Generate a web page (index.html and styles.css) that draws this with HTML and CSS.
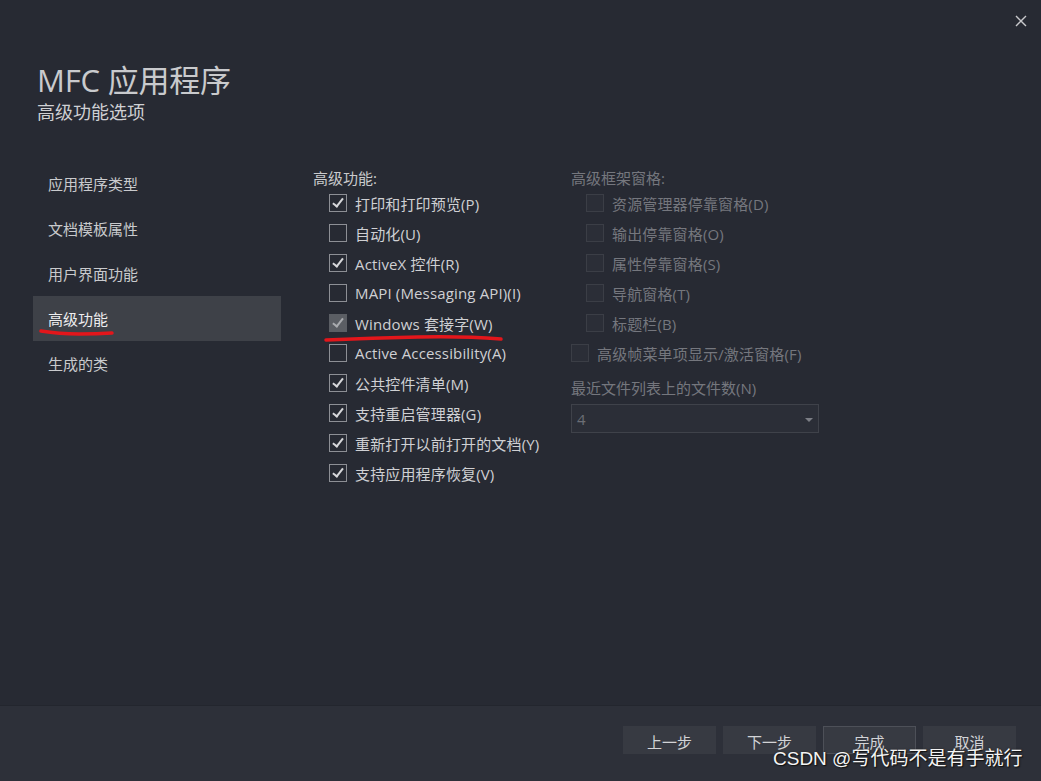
FILE: index.html
```html
<!DOCTYPE html>
<html lang="zh-CN">
<head>
<meta charset="utf-8">
<title>MFC 应用程序</title>
<link rel="stylesheet" href="styles.css">
</head>
<body>
<div class="window">
  <button class="close" aria-label="关闭">
    <svg width="12" height="12" viewBox="0 0 12 12"><path d="M1 1L11 11M11 1L1 11" stroke="#c8c9cc" stroke-width="1.4" fill="none"/></svg>
  </button>
  <header class="header">
    <h1 class="title">MFC 应用程序</h1>
    <div class="subtitle">高级功能选项</div>
  </header>
  <main class="main">
    <nav class="nav">
      <div class="nav-item">应用程序类型</div>
      <div class="nav-item">文档模板属性</div>
      <div class="nav-item">用户界面功能</div>
      <div class="nav-item active">高级功能</div>
      <div class="nav-item">生成的类</div>
    </nav>
    <section class="col col-features">
      <div class="group-label">高级功能:</div>
      <label class="row"><span class="cb checked"></span><span>打印和打印预览(P)</span></label>
      <label class="row"><span class="cb"></span><span>自动化(U)</span></label>
      <label class="row"><span class="cb checked"></span><span>ActiveX 控件(R)</span></label>
      <label class="row"><span class="cb"></span><span>MAPI (Messaging API)(I)</span></label>
      <label class="row"><span class="cb checked dim"></span><span>Windows 套接字(W)</span></label>
      <label class="row"><span class="cb"></span><span>Active Accessibility(A)</span></label>
      <label class="row"><span class="cb checked"></span><span>公共控件清单(M)</span></label>
      <label class="row"><span class="cb checked"></span><span>支持重启管理器(G)</span></label>
      <label class="row"><span class="cb checked"></span><span>重新打开以前打开的文档(Y)</span></label>
      <label class="row"><span class="cb checked"></span><span>支持应用程序恢复(V)</span></label>
    </section>
    <section class="col col-frame disabled">
      <div class="group-label">高级框架窗格:</div>
      <div class="sub">
        <label class="row"><span class="cb off"></span><span>资源管理器停靠窗格(D)</span></label>
        <label class="row"><span class="cb off"></span><span>输出停靠窗格(O)</span></label>
        <label class="row"><span class="cb off"></span><span>属性停靠窗格(S)</span></label>
        <label class="row"><span class="cb off"></span><span>导航窗格(T)</span></label>
        <label class="row"><span class="cb off"></span><span>标题栏(B)</span></label>
      </div>
      <label class="row"><span class="cb off"></span><span>高级帧菜单项显示/激活窗格(F)</span></label>
      <div class="group-label mru">最近文件列表上的文件数(N)</div>
      <div class="select"><span>4</span><span class="arrow"></span></div>
    </section>
  </main>
  <footer class="footer">
    <button class="btn">上一步</button>
    <button class="btn">下一步</button>
    <button class="btn primary">完成</button>
    <button class="btn">取消</button>
  </footer>
  <svg class="mark mark-nav" width="80" height="12" viewBox="0 0 80 12"><path d="M2 4 Q20 7 40 7 Q58 7 73 6" stroke="#e3161b" stroke-width="3.5" fill="none" stroke-linecap="round"/></svg>
  <svg class="mark mark-win" width="190" height="12" viewBox="0 0 190 12"><path d="M3 7 Q50 5 95 4 Q140 3 178 6" stroke="#e3161b" stroke-width="3.5" fill="none" stroke-linecap="round"/></svg>
  <div class="watermark">CSDN @写代码不是有手就行</div>
</div>
</body>
</html>
```

FILE: styles.css
```css
* { box-sizing: border-box; }
html, body { margin: 0; padding: 0; }
body {
  width: 1041px;
  height: 781px;
  overflow: hidden;
  background: #272a33;
  font-family: "Open Sans", "Noto Sans CJK SC", sans-serif;
  color: #d2d3d6;
}
.window {
  position: relative;
  width: 1041px;
  height: 781px;
  display: flex;
  flex-direction: column;
  background: #272a33;
}
.close {
  position: absolute;
  top: 15px;
  right: 14px;
  width: 12px;
  height: 12px;
  padding: 0;
  border: 0;
  background: none;
  display: flex;
}
.header {
  padding: 60px 0 0 37px;
}
.title {
  margin: 0;
  font-weight: normal;
  font-size: 31px;
  line-height: 40px;
  color: #c9cacd;
  letter-spacing: -0.2px;
}
.subtitle {
  font-size: 18px;
  line-height: 24px;
  color: #cfd0d3;
}
.main {
  flex: 1;
  display: flex;
  margin-top: 37px;
}
.nav {
  width: 248px;
  margin-left: 33px;
  display: flex;
  flex-direction: column;
}
.nav-item {
  height: 45px;
  line-height: 46px;
  padding-left: 15px;
  font-size: 15px;
  color: #c9cacd;
}
.nav-item.active {
  background: #3e4148;
  color: #eeeeef;
}
.col {
  padding-top: 7px;
  display: flex;
  flex-direction: column;
}
.col-features {
  margin-left: 32px;
  width: 258px;
}
.group-label {
  font-size: 15px;
  line-height: 20px;
  color: #c9cacd;
}
.col-features .row { padding-left: 16px; }
.sub .row { padding-left: 15px; }
.row {
  height: 30px;
  display: flex;
  align-items: center;
  gap: 8px;
  font-size: 15px;
  letter-spacing: 0.15px;
  color: #cfd0d3;
  white-space: nowrap;
}
.cb {
  width: 18px;
  height: 18px;
  flex: none;
  border: 1px solid #8d8f95;
  background: #272a33;
  position: relative;
}
.cb.checked::after {
  content: "";
  position: absolute;
  left: 5px;
  top: 1px;
  width: 4px;
  height: 9px;
  border: solid #d6d7da;
  border-width: 0 2px 2px 0;
  transform: rotate(38deg);
}
.cb.dim {
  background: #5b5e64;
  border-color: #5b5e64;
}
.cb.dim::after { border-color: #a9abaf; }
.cb.off {
  border-color: #3b3e46;
  background: #2b2e37;
}
.col-frame {
  margin-left: 0;
  width: 250px;
}
.disabled .group-label,
.disabled .row { color: #75777e; }
.mru { margin-top: 10px; }
.select {
  margin-top: 6px;
  width: 248px;
  height: 29px;
  border: 1px solid #3f424a;
  background: #2b2e37;
  display: flex;
  align-items: center;
  justify-content: space-between;
  padding: 0 5px 0 5px;
  font-size: 15px;
  color: #6c6e75;
}
.arrow {
  width: 0;
  height: 0;
  border-left: 4px solid transparent;
  border-right: 4px solid transparent;
  border-top: 4px solid #7c7e85;
  margin-top: 2px;
}
.footer {
  height: 76px;
  background: #2d3039;
  border-top: 1px solid #23262e;
  display: flex;
  justify-content: flex-end;
  align-items: flex-start;
  gap: 7px;
  padding: 20px 25px 0 0;
}
.btn {
  width: 93px;
  height: 28px;
  border: 1px solid #373a42;
  background: #373a42;
  color: #d2d3d6;
  font-family: "Open Sans", "Noto Sans CJK SC", sans-serif;
  font-size: 15px;
  line-height: 20px;
  padding: 4px 0 0 0;
}
.btn.primary {
  border-color: #4d5058;
}
.mark { position: absolute; }
.mark-nav { left: 39px; top: 327px; }
.mark-win { left: 323px; top: 333px; }
.watermark {
  position: absolute;
  left: 773px;
  top: 747px;
  font-family: "Liberation Sans", "Noto Sans CJK SC", sans-serif;
  font-size: 19px;
  line-height: 24px;
  color: #f4f4f4;
  text-shadow: 1px 1px 1px #111, 0 0 2px #222;
  white-space: nowrap;
}
```
